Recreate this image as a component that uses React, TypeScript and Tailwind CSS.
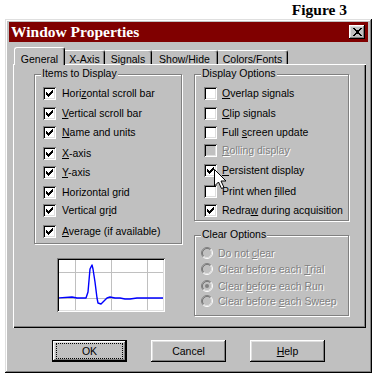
import React from "react";

type Row = { label: string; checked?: boolean; disabled?: boolean; mt: string };

const itemsToDisplay: Row[] = [
  { label: "Hori&zontal scroll bar", checked: true, mt: "mt-[12px]" },
  { label: "&Vertical scroll bar", checked: true, mt: "mt-[7px]" },
  { label: "&Name and units", checked: true, mt: "mt-[6px]" },
  { label: "&X-axis", checked: true, mt: "mt-[8px]" },
  { label: "&Y-axis", checked: true, mt: "mt-[6px]" },
  { label: "Horizontal grid", checked: true, mt: "mt-[7px]" },
  { label: "Vertical gr&id", checked: true, mt: "mt-[5px]" },
  { label: "&Average (if available)", checked: true, mt: "mt-[8px]" },
];

const displayOptions: Row[] = [
  { label: "&Overlap signals", mt: "mt-[12px]" },
  { label: "&Clip signals", mt: "mt-[7px]" },
  { label: "Full &screen update", mt: "mt-[6px]" },
  { label: "&Rolling display", disabled: true, mt: "mt-[5px]" },
  { label: "&Persistent display", checked: true, mt: "mt-[7px]" },
  { label: "Print when &filled", mt: "mt-[8px]" },
  { label: "Redra&w during acquisition", checked: true, mt: "mt-[6px]" },
];

const clearOptions: Row[] = [
  { label: "Do not &clear", mt: "mt-[11px]" },
  { label: "Clear before each &Trial", mt: "mt-[4px]" },
  { label: "Clear &before each Run", checked: true, mt: "mt-[5px]" },
  { label: "Clear before &each Sweep", mt: "mt-[3px]" },
];

// "&" marks the mnemonic letter, like a Windows resource string
function Mnemonic({ text }: { text: string }) {
  const i = text.indexOf("&");
  if (i < 0) return <>{text}</>;
  return (
    <>
      {text.slice(0, i)}
      <span className="underline decoration-1 underline-offset-[1px]">{text[i + 1]}</span>
      {text.slice(i + 2)}
    </>
  );
}

function CheckBox({ checked, disabled }: { checked?: boolean; disabled?: boolean }) {
  return (
    <span
      className={`flex h-[13px] w-[13px] shrink-0 items-center justify-center shadow-[inset_1px_1px_0_#808080,inset_-1px_-1px_0_#fff,inset_2px_2px_0_#000,inset_-2px_-2px_0_#dfdfdf] ${
        disabled ? "bg-[#c0c0c0]" : "bg-white"
      }`}
    >
      {checked && (
        <svg width="7" height="7" viewBox="0 0 7 7" shapeRendering="crispEdges">
          <path
            d="M6 0h1v1h-1z M5 1h2v1h-2z M0 2h1v1h-1z M4 2h3v1h-3z M0 3h2v1h-2z M3 3h3v1h-3z M0 4h5v1h-5z M1 5h3v1h-3z M2 6h1v1h-1z"
            fill="#000"
          />
        </svg>
      )}
    </span>
  );
}

function Radio({ checked }: { checked?: boolean }) {
  return (
    <svg width="12" height="12" viewBox="0 0 12 12" className="shrink-0">
      <circle cx="6" cy="6" r="5" fill="#c0c0c0" />
      <path d="M2.11 9.89 A5.5 5.5 0 0 1 9.89 2.11" stroke="#808080" fill="none" />
      <path d="M9.89 2.11 A5.5 5.5 0 0 1 2.11 9.89" stroke="#fff" fill="none" />
      <path d="M2.82 9.18 A4.5 4.5 0 0 1 9.18 2.82" stroke="#000" strokeOpacity="0.35" fill="none" />
      <path d="M9.18 2.82 A4.5 4.5 0 0 1 2.82 9.18" stroke="#dfdfdf" fill="none" />
      {checked && <circle cx="6" cy="6" r="2" fill="#808080" />}
    </svg>
  );
}

function GroupBox({
  title,
  className,
  children,
}: {
  title: string;
  className: string;
  children: React.ReactNode;
}) {
  return (
    <div
      className={`relative flex flex-col border border-[#808080] shadow-[inset_1px_1px_0_#fff,1px_1px_0_#fff] ${className}`}
    >
      <span className="absolute -top-[8px] left-[6px] bg-[#c0c0c0] px-[1px] leading-[13px] text-black [text-shadow:none]">
        {title}
      </span>
      {children}
    </div>
  );
}

function Graph() {
  const trace =
    "0,40 15,39 20,40 29,40 31,34 33,11 35,7 36,11 38,24 40,40 41,45 44,46 46,44 50,40 53,39 58,40 63,40 68,41 73,41 80,40 108,40";
  return (
    <div className="ml-[23px] mt-[14px] h-[54px] w-[108px] bg-white p-[2px] shadow-[inset_1px_1px_0_#808080,inset_-1px_-1px_0_#fff,inset_2px_2px_0_#000,inset_-2px_-2px_0_#dfdfdf]">
      <svg width="104" height="50" viewBox="2 2 104 50">
        <g stroke="#c0c0c0" strokeWidth="1" shapeRendering="crispEdges">
          <line x1="18.5" y1="0" x2="18.5" y2="54" />
          <line x1="54.5" y1="0" x2="54.5" y2="54" />
          <line x1="90.5" y1="0" x2="90.5" y2="54" />
          <line x1="0" y1="14.5" x2="108" y2="14.5" />
          <line x1="0" y1="40.5" x2="108" y2="40.5" />
        </g>
        <polyline points={trace} fill="none" stroke="#0000ff" strokeWidth="1.4" strokeLinejoin="round" />
      </svg>
    </div>
  );
}

const raised =
  "shadow-[inset_-1px_-1px_0_#000,inset_1px_1px_0_#fff,inset_-2px_-2px_0_#808080,inset_2px_2px_0_#dfdfdf]";

export default function App() {
  return (
    <div className="relative h-[376px] w-[376px] overflow-hidden bg-white font-['Liberation_Sans',Arial,sans-serif] text-[10.5px] text-black">
      <div className="flex h-[19px] items-center justify-end pr-[29px] font-['Liberation_Serif','Times_New_Roman',serif] text-[15.5px] font-bold leading-none">
        Figure 3
      </div>

      {/* dialog window */}
      <div className="ml-[5px] h-[354px] w-[367px] bg-[#c0c0c0] px-[4px] pt-[3px] shadow-[inset_-1px_-1px_0_#000,inset_1px_1px_0_#dfdfdf,inset_-2px_-2px_0_#808080,inset_2px_2px_0_#fff]">
        <div className="flex h-[20px] items-center justify-between bg-[#800000] pl-[2px] pr-[3px]">
          <span className="font-['Liberation_Serif','Times_New_Roman',serif] text-[15.5px] font-bold leading-none text-white">
            Window Properties
          </span>
          <span className={`flex h-[14px] w-[16px] items-center justify-center bg-[#c0c0c0] ${raised}`}>
            <svg width="9" height="8" viewBox="0 0 8 7" shapeRendering="crispEdges">
              <path
                d="M0 0h2v1h-2z M6 0h2v1h-2z M1 1h2v1h-2z M5 1h2v1h-2z M2 2h4v1h-4z M3 3h2v1h-2z M2 4h4v1h-4z M1 5h2v1h-2z M5 5h2v1h-2z M0 6h2v1h-2z M6 6h2v1h-2z"
                fill="#000"
              />
            </svg>
          </span>
        </div>

        <div className="ml-[4px] w-[353px]">
          {/* tabs */}
          <div className="relative z-10 mt-[5px] flex h-[17px] items-end">
            <div className="-mb-[1px] ml-[1px] h-[18px] w-[51px] rounded-t-[3px] border-l border-t border-r border-l-white border-t-white border-r-black bg-[#c0c0c0] pt-[5px] text-center leading-[12px] shadow-[inset_-1px_0_0_#808080]">
              General
            </div>
            <div className="h-[14px] w-[40px] rounded-tr-[3px] border-t border-r border-t-white border-r-black pt-[2px] text-center leading-[12px] shadow-[inset_-1px_0_0_#808080]">
              X-Axis
            </div>
            <div className="h-[14px] w-[47px] rounded-tr-[3px] border-t border-r border-t-white border-r-black pt-[2px] text-center leading-[12px] shadow-[inset_-1px_0_0_#808080]">
              Signals
            </div>
            <div className="h-[14px] w-[66px] rounded-tr-[3px] border-t border-r border-t-white border-r-black pt-[2px] text-center leading-[12px] shadow-[inset_-1px_0_0_#808080]">
              Show/Hide
            </div>
            <div className="h-[14px] w-[70px] rounded-tr-[3px] border-t border-r border-t-white border-r-black pt-[2px] text-center leading-[12px] shadow-[inset_-1px_0_0_#808080]">
              Colors/Fonts
            </div>
          </div>

          {/* tab page */}
          <div className="flex h-[264px] pl-[21px] pt-[10px] shadow-[inset_1px_1px_0_#fff,inset_-1px_-1px_0_#000,inset_-2px_-2px_0_#808080]">
            <div className="flex w-[149px] flex-col">
              <GroupBox title="Items to Display" className="h-[170px] w-[148px] pl-[8px]">
                {itemsToDisplay.map((r) => (
                  <div key={r.label} className={`flex h-[13px] items-center gap-[6px] leading-[13px] ${r.mt}`}>
                    <CheckBox checked={r.checked} />
                    <span>
                      <Mnemonic text={r.label} />
                    </span>
                  </div>
                ))}
              </GroupBox>
              <Graph />
            </div>

            <div className="ml-[11px] flex w-[156px] flex-col">
              <GroupBox title="Display Options" className="h-[147px] w-[155px] pl-[9px]">
                {displayOptions.map((r) => (
                  <div key={r.label} className={`flex h-[13px] items-center gap-[5px] leading-[13px] ${r.mt}`}>
                    <CheckBox checked={r.checked} disabled={r.disabled} />
                    <span className={r.disabled ? "text-[#808080] [text-shadow:1px_1px_0_#fff]" : ""}>
                      <Mnemonic text={r.label} />
                    </span>
                  </div>
                ))}
              </GroupBox>
              <GroupBox title="Clear Options" className="mt-[14px] h-[81px] w-[155px] pl-[6px]">
                {clearOptions.map((r) => (
                  <div key={r.label} className={`flex h-[12px] items-center gap-[5px] leading-[13px] ${r.mt}`}>
                    <Radio checked={r.checked} />
                    <span className="text-[#808080] [text-shadow:1px_1px_0_#fff]">
                      <Mnemonic text={r.label} />
                    </span>
                  </div>
                ))}
              </GroupBox>
            </div>
          </div>
        </div>

        {/* buttons */}
        <div className="mt-[12px] flex gap-[24px] pl-[43px]">
          <div className="flex h-[22px] w-[75px] border border-black bg-[#c0c0c0]">
            <div className={`flex flex-1 px-[3px] py-[2px] ${raised}`}>
              <div className="flex flex-1 items-center justify-center border border-dotted border-black leading-[13px]">
                OK
              </div>
            </div>
          </div>
          <div className={`flex h-[22px] w-[75px] items-center justify-center bg-[#c0c0c0] leading-[13px] ${raised}`}>
            Cancel
          </div>
          <div className={`flex h-[22px] w-[75px] items-center justify-center bg-[#c0c0c0] leading-[13px] ${raised}`}>
            <span>
              <Mnemonic text="&Help" />
            </span>
          </div>
        </div>
      </div>

      {/* mouse pointer over "Persistent display" */}
      <svg className="absolute left-[214px] top-[169px]" width="13" height="21" viewBox="0 0 13 21">
        <path d="M0.5 0.5 L0.5 17 L4.5 13 L7.5 19.5 L10 18.5 L7 12 L12 12 Z" fill="#fff" stroke="#000" strokeWidth="1" />
      </svg>
    </div>
  );
}
